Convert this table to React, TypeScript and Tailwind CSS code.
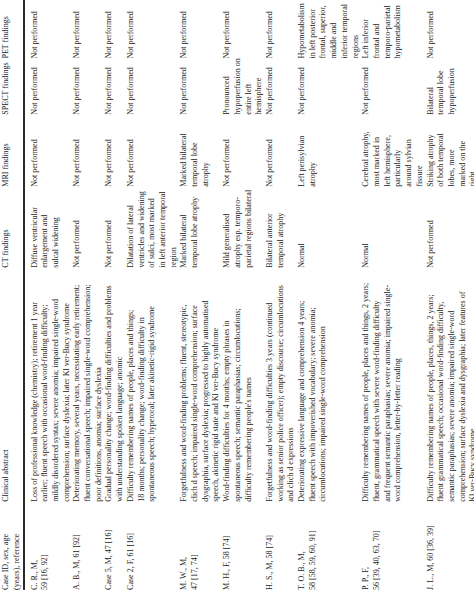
import React from 'react';

type Row = {
  id: string[];
  abstract: string[];
  ct: string[];
  mri: string[];
  spect: string[];
  pet: string[];
};

const NP = ['Not performed'];

const rows: Row[] = [
  {
    id: ['C. R., M,', '59 [16, 92]'],
    abstract: [
      'Loss of professional knowledge (chemistry); retirement 1 year',
      'earlier; fluent speech with occasional word-finding difficulty;',
      'mildly disordered syntax; severe anomia; impaired single-word',
      'comprehension; surface dyslexia; later Kl ver-Bucy syndrome',
    ],
    ct: ['Diffuse ventricular', 'enlargement and', 'sulcal widening'],
    mri: NP,
    spect: NP,
    pet: NP,
  },
  {
    id: ['A. B., M, 61 [92]'],
    abstract: [
      'Deteriorating memory, several years, necessitating early retirement;',
      'fluent conversational speech; impaired single-word comprehension;',
      'poor definitions, anomia; surface dyslexia',
    ],
    ct: NP,
    mri: NP,
    spect: NP,
    pet: NP,
  },
  {
    id: ['Case 5, M, 47 [16]'],
    abstract: [
      'Gradual personality change; word-finding difficulties and problems',
      'with understanding spoken language; anomic',
    ],
    ct: NP,
    mri: NP,
    spect: NP,
    pet: NP,
  },
  {
    id: ['Case 2, F, 61 [16]'],
    abstract: [
      'Difficulty remembering names of people, places and things;',
      '18 months; personality change; word-finding difficulty in',
      'spontaneous speech; hyperoral; later akinetic-rigid syndrome',
    ],
    ct: [
      'Dilatation of lateral',
      'ventricles and widening',
      'of sulci, most marked',
      'in left anterior temporal',
      'region',
    ],
    mri: NP,
    spect: NP,
    pet: NP,
  },
  {
    id: ['M. W., M,', '47 [17, 74]'],
    abstract: [
      'Forgetfulness and word-finding problems; fluent, stereotypic,',
      'clich d speech; impaired single-word comprehension; surface',
      'dysgraphia, surface dyslexia; progressed to highly automatised',
      'speech, akinetic rigid state and Kl ver-Bucy syndrome',
    ],
    ct: ['Marked bilateral', 'temporal lobe atrophy'],
    mri: ['Marked bilateral', 'temporal lobe', 'atrophy'],
    spect: NP,
    pet: NP,
  },
  {
    id: ['M. H., F, 58 [74]'],
    abstract: [
      'Word-finding difficulties for 4 months; empty phrases in',
      'spontaneous speech; semantic paraphasias; circumlocutions;',
      "difficulty remembering people's names",
    ],
    ct: ['Mild generalised', 'atrophy esp. temporo-', 'parietal regions bilateral'],
    mri: NP,
    spect: ['Pronounced', 'hypoperfusion on', 'entire left', 'hemisphere'],
    pet: NP,
  },
  {
    id: ['H. S., M, 58 [74]'],
    abstract: [
      'Forgetfulness and word-finding difficulties 3 years (continued',
      'working as senior police officer); empty discourse; circumlocutions',
      'and clich d expressions',
    ],
    ct: ['Bilateral anterior', 'temporal atrophy'],
    mri: NP,
    spect: NP,
    pet: NP,
  },
  {
    id: ['T. O. B., M,', '58 [58, 59, 60, 91]'],
    abstract: [
      'Deteriorating expressive language and comprehension 4 years;',
      'fluent speech with impoverished vocabulary; severe anomia;',
      'circumlocutions; impaired single-word comprehension',
    ],
    ct: ['Normal'],
    mri: ['Left perisylvian', 'atrophy'],
    spect: NP,
    pet: [
      'Hypometabolism',
      'in left posterior',
      'frontal, superior,',
      'middle and',
      'inferior temporal',
      'regions',
    ],
  },
  {
    id: ['P. P., F,', '56 [39, 40, 63, 70]'],
    abstract: [
      'Difficulty remembering names of people, places and things, 2 years;',
      'fluent, grammatical speech with severe word-finding difficulty',
      'and frequent semantic paraphasias; severe anomia; impaired single-',
      'word comprehension, letter-by-letter reading',
    ],
    ct: ['Normal'],
    mri: [
      'Cerebral atrophy,',
      'most marked in',
      'left hemisphere,',
      'particularly',
      'around sylvian',
      'fissure',
    ],
    spect: NP,
    pet: ['Left inferior', 'frontal and', 'temporo-parietal', 'hypometabolism'],
  },
  {
    id: ['J. L., M, 60 [36, 39]'],
    abstract: [
      'Difficulty remembering names of people, places, things, 2 years;',
      'fluent grammatical speech; occasional word-finding difficulty,',
      'semantic paraphasias; severe anomia; impaired single-word',
      'comprehension; surface dyslexia and dysgraphia; later features of',
      'Kl ver-Bucy syndrome',
    ],
    ct: NP,
    mri: ['Striking atrophy', 'of both temporal', 'lobes, more', 'marked on the', 'right'],
    spect: ['Bilateral', 'temporal lobe', 'hypoperfusion'],
    pet: NP,
  },
];

const Lines = ({ lines }: { lines: string[] }) => (
  <div className="whitespace-nowrap">
    {lines.map((l, i) => (
      <div key={i}>{l}</div>
    ))}
  </div>
);

// column widths before the sideways squeeze (x0.89)
const cols = 'grid grid-cols-[99px_263px_91px_81px_63px_90px]';

export default function App() {
  return (
    <div className="relative w-[474px] h-[590px] overflow-hidden bg-white">
      {/* table laid out upright, squeezed sideways, then turned a quarter to the left */}
      <div className="w-[663px] h-[474px] origin-top-left translate-y-[590px] -rotate-90 scale-x-[0.89] font-['Liberation_Serif',serif] text-[9px] leading-[10.7px] text-[#222]">
        <div className="-ml-[1px] -mt-[1.2px]">
          <div className={`${cols} pb-[1.5px] border-b-2 border-[#2a2a2a]`}>
            <Lines lines={['Case ID, sex, age', '(years), reference']} />
            <Lines lines={['Clinical abstract']} />
            <Lines lines={['CT findings']} />
            <Lines lines={['MRI findings']} />
            <Lines lines={['SPECT findings']} />
            <Lines lines={['PET findings']} />
          </div>
          <div className="pt-[3.6px]">
            {rows.map((r, i) => (
              <div key={i} className={cols}>
                <Lines lines={r.id} />
                <Lines lines={r.abstract} />
                <Lines lines={r.ct} />
                <Lines lines={r.mri} />
                <Lines lines={r.spect} />
                <Lines lines={r.pet} />
              </div>
            ))}
          </div>
        </div>
      </div>
    </div>
  );
}
